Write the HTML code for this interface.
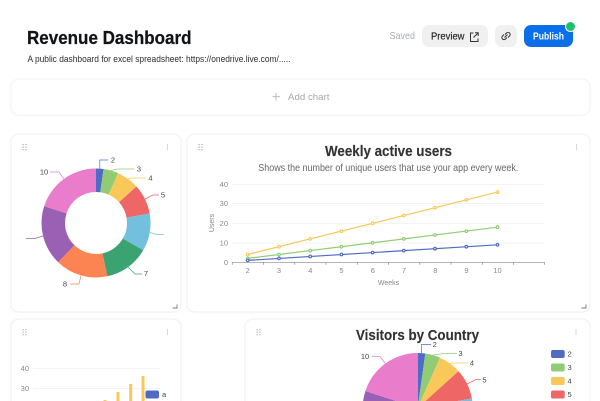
<!DOCTYPE html>
<html><head><meta charset="utf-8"><style>
html,body{margin:0;padding:0;background:#fff;width:600px;height:401px;overflow:hidden}
svg{display:block;font-family:"Liberation Sans",sans-serif;filter:blur(.3px)}
.ax{font-size:7.500px;fill:#888}
</style></head><body>
<svg width="600" height="401" viewBox="0 0 600 401" xmlns="http://www.w3.org/2000/svg">
<defs><filter id="s" x="-5%" y="-5%" width="110%" height="110%"><feDropShadow dx="0" dy="0.5" stdDeviation="1" flood-color="#000" flood-opacity="0.025"/></filter></defs>

<!-- header -->
<text x="27" y="44" font-size="18.500" font-weight="700" fill="#111316" stroke="#111316" stroke-width=".25" textLength="164.500" lengthAdjust="spacingAndGlyphs">Revenue Dashboard</text>
<text x="27.500" y="62" font-size="8.800" fill="#2c2c2c" textLength="263" lengthAdjust="spacingAndGlyphs">A public dashboard for excel spreadsheet: https://onedrive.live.com/.....</text>
<text x="389.500" y="39" font-size="10.500" fill="#aaadb2" textLength="25.500" lengthAdjust="spacingAndGlyphs">Saved</text>
<rect x="422" y="25" width="66" height="22" rx="7" fill="#f0f0f1"/>
<text x="431" y="39.500" font-size="10.500" fill="#222" stroke="#222" stroke-width=".15" textLength="33.500" lengthAdjust="spacingAndGlyphs">Preview</text>
<path d="M473.500 33H470.500V41.500H478V38.500M475 32.800H478.200V36M478 33L473.500 37.500" fill="none" stroke="#333" stroke-width="1"/>
<rect x="495" y="25" width="22" height="22" rx="7" fill="#f0f0f1"/>
<path d="M505 34.500l1.500-1.500a2 2 0 0 1 3 3l-1.500 1.500M507 37.500l-1.500 1.500a2 2 0 0 1-3-3l1.500-1.500M504.500 37.500l3-3" fill="none" stroke="#333" stroke-width="1"/>
<rect x="524" y="25" width="49" height="22" rx="7" fill="#0a6fe8"/>
<text x="533" y="39.500" font-size="10.500" font-weight="700" fill="#fff" textLength="31" lengthAdjust="spacingAndGlyphs">Publish</text>
<circle cx="570.500" cy="26.500" r="5" fill="#22bf68" stroke="#fff" stroke-width="1"/>

<!-- add chart -->
<rect x="11" y="79" width="579" height="36" rx="8" fill="#fff" stroke="#f3f3f5" filter="url(#s)"/>
<path d="M276 93V100.500M272.500 96.700H280" stroke="#b5b5b8" stroke-width="0.900"/>
<text x="288" y="100" font-size="9.500" fill="#a5a7ab" textLength="41.500" lengthAdjust="spacingAndGlyphs">Add chart</text>

<!-- cards -->
<rect x="11" y="134" width="170" height="178" rx="8" fill="#fff" stroke="#f1f1f3" filter="url(#s)"/>
<rect x="187" y="134" width="403" height="178" rx="8" fill="#fff" stroke="#f1f1f3" filter="url(#s)"/>
<rect x="11" y="319" width="170" height="100" rx="8" fill="#fff" stroke="#f1f1f3" filter="url(#s)"/>
<rect x="245" y="319" width="345" height="100" rx="8" fill="#fff" stroke="#f1f1f3" filter="url(#s)"/>

<!-- grips -->
<g fill="#b8b8bc">
<rect x="22.500" y="144" width="1.300" height="1.300"/><rect x="25.300" y="144" width="1.300" height="1.300"/><rect x="22.500" y="146.500" width="1.300" height="1.300"/><rect x="25.300" y="146.500" width="1.300" height="1.300"/><rect x="22.500" y="149" width="1.300" height="1.300"/><rect x="25.300" y="149" width="1.300" height="1.300"/>
<rect x="198.500" y="144" width="1.300" height="1.300"/><rect x="201.300" y="144" width="1.300" height="1.300"/><rect x="198.500" y="146.500" width="1.300" height="1.300"/><rect x="201.300" y="146.500" width="1.300" height="1.300"/><rect x="198.500" y="149" width="1.300" height="1.300"/><rect x="201.300" y="149" width="1.300" height="1.300"/>
<rect x="22.500" y="329" width="1.300" height="1.300"/><rect x="25.300" y="329" width="1.300" height="1.300"/><rect x="22.500" y="331.500" width="1.300" height="1.300"/><rect x="25.300" y="331.500" width="1.300" height="1.300"/><rect x="22.500" y="334" width="1.300" height="1.300"/><rect x="25.300" y="334" width="1.300" height="1.300"/>
<rect x="256.500" y="329" width="1.300" height="1.300"/><rect x="259.300" y="329" width="1.300" height="1.300"/><rect x="256.500" y="331.500" width="1.300" height="1.300"/><rect x="259.300" y="331.500" width="1.300" height="1.300"/><rect x="256.500" y="334" width="1.300" height="1.300"/><rect x="259.300" y="334" width="1.300" height="1.300"/>
<circle cx="167.500" cy="145" r=".6"/><circle cx="167.500" cy="147" r=".6"/><circle cx="167.500" cy="149" r=".6"/>
<circle cx="576.500" cy="145" r=".6"/><circle cx="576.500" cy="147" r=".6"/><circle cx="576.500" cy="149" r=".6"/>
<circle cx="167.500" cy="330" r=".6"/><circle cx="167.500" cy="332" r=".6"/><circle cx="167.500" cy="334" r=".6"/>
<circle cx="576" cy="330" r=".6"/><circle cx="576" cy="332" r=".6"/><circle cx="576" cy="334" r=".6"/>
</g>
<path d="M177 304.500V308H172.500M586 304.500V308H581.500" fill="none" stroke="#777" stroke-width="0.900"/>

<!-- donut -->
<path fill="#4f6bc6" d="M96 168.500A54.500 54.500 0 0 1 103.580 169.030L100.310 192.300A31 31 0 0 0 96 192Z"/>
<path fill="#91cc75" d="M103.580 169.030A54.500 54.500 0 0 1 118.170 173.210L108.610 194.680A31 31 0 0 0 100.310 192.300Z"/>
<path fill="#fac858" d="M118.170 173.210A54.500 54.500 0 0 1 136.500 186.530L119.040 202.260A31 31 0 0 0 108.610 194.680Z"/>
<path fill="#ee6666" d="M136.500 186.530A54.500 54.500 0 0 1 149.670 213.540L126.530 217.620A31 31 0 0 0 119.040 202.260Z"/>
<path fill="#73c0de" d="M149.670 213.540A54.500 54.500 0 0 1 143.200 250.250L122.850 238.500A31 31 0 0 0 126.530 217.620Z"/>
<path fill="#3ba272" d="M143.200 250.250A54.500 54.500 0 0 1 107.330 276.310L102.450 253.320A31 31 0 0 0 122.850 238.500Z"/>
<path fill="#fc8452" d="M107.330 276.310A54.500 54.500 0 0 1 58.140 262.200L74.470 245.300A31 31 0 0 0 102.450 253.320Z"/>
<path fill="#9a60b4" d="M58.140 262.200A54.500 54.500 0 0 1 44.170 206.160L66.520 213.420A31 31 0 0 0 74.470 245.300Z"/>
<path fill="#ea7ccc" d="M44.170 206.160A54.500 54.500 0 0 1 96 168.500L96 192A31 31 0 0 0 66.520 213.420Z"/>
<g fill="none" stroke-width="0.700">
<path d="M99.800 168.500V160H108" stroke="#4f6bc6"/>
<path d="M111 170.500L118 169H134" stroke="#91cc75"/>
<path d="M128 179L131 178H146" stroke="#fac858"/>
<path d="M145 199L153 195H159" stroke="#ee6666"/>
<path d="M150 232.500L157 234.500H164" stroke="#73c0de"/>
<path d="M128 267L135 274H142" stroke="#3ba272"/>
<path d="M81 275.500L79 284H70" stroke="#fc8452"/>
<path d="M43 236L35 238.500H26" stroke="#9a60b4"/>
<path d="M64 179L59 172H50" stroke="#ea7ccc"/>
</g>
<g font-size="7.500" fill="#444" text-anchor="middle">
<text x="113" y="162.500">2</text><text x="139" y="171.500">3</text><text x="150.500" y="180.500">4</text><text x="163" y="197.500">5</text><text x="146" y="276">7</text><text x="65" y="286.500">8</text><text x="44" y="174.500">10</text>
</g>

<!-- line chart -->
<text x="325" y="156" font-size="14.500" font-weight="700" fill="#333" stroke="#333" stroke-width=".15" textLength="127" lengthAdjust="spacingAndGlyphs">Weekly active users</text>
<text x="258.300" y="171" font-size="10.300" fill="#666" textLength="260" lengthAdjust="spacingAndGlyphs">Shows the number of unique users that use your app every week.</text>
<path d="M232 184.500H544.500M232 203.500H544.500M232 223.500H544.500M232 243H544.500" stroke="#eef0f3" stroke-width="0.800"/>
<path d="M232.300 262.300H544.500M232.300 262.300v2.500M263.500 262.300v2.500M294.800 262.300v2.500M326 262.300v2.500M357.300 262.300v2.500M388.500 262.300v2.500M419.800 262.300v2.500M451 262.300v2.500M482.300 262.300v2.500M513.500 262.300v2.500M544.500 262.300v2.500" stroke="#8a8a8e" stroke-width="0.700" fill="none"/>
<g class="ax" text-anchor="end">
<text x="228" y="186.800">40</text><text x="228" y="206">30</text><text x="228" y="225.800">20</text><text x="228" y="245.300">10</text><text x="228" y="264.800">0</text>
</g>
<g class="ax" text-anchor="middle">
<text x="247.700" y="272.800">2</text><text x="279" y="272.800">3</text><text x="310.300" y="272.800">4</text><text x="341.500" y="272.800">5</text><text x="372.800" y="272.800">6</text><text x="404" y="272.800">7</text><text x="435.300" y="272.800">8</text><text x="466.500" y="272.800">9</text><text x="497.500" y="272.800">10</text>
<text x="388.500" y="285" style="font-size:7px">Weeks</text>
<text transform="translate(214 223) rotate(-90)" style="font-size:7px">Users</text>
</g>
<g fill="#fff" stroke-width="1.200">
<g stroke="#fac858"><path d="M247.700 254.500L497.500 192.100" fill="none"/>
<circle cx="247.700" cy="254.500" r="1.300"/><circle cx="279" cy="246.700" r="1.300"/><circle cx="310.200" cy="238.900" r="1.300"/><circle cx="341.400" cy="231.100" r="1.300"/><circle cx="372.600" cy="223.300" r="1.300"/><circle cx="403.800" cy="215.500" r="1.300"/><circle cx="435" cy="207.700" r="1.300"/><circle cx="466.300" cy="199.900" r="1.300"/><circle cx="497.500" cy="192.100" r="1.300"/></g>
<g stroke="#91cc75"><path d="M247.700 258.400L497.500 227.200" fill="none"/>
<circle cx="247.700" cy="258.400" r="1.300"/><circle cx="279" cy="254.500" r="1.300"/><circle cx="310.200" cy="250.600" r="1.300"/><circle cx="341.400" cy="246.700" r="1.300"/><circle cx="372.600" cy="242.800" r="1.300"/><circle cx="403.800" cy="238.900" r="1.300"/><circle cx="435" cy="235" r="1.300"/><circle cx="466.300" cy="231.100" r="1.300"/><circle cx="497.500" cy="227.200" r="1.300"/></g>
<g stroke="#4f6bc6"><path d="M247.700 260.400L497.500 244.800" fill="none"/>
<circle cx="247.700" cy="260.400" r="1.300"/><circle cx="279" cy="258.400" r="1.300"/><circle cx="310.200" cy="256.500" r="1.300"/><circle cx="341.400" cy="254.500" r="1.300"/><circle cx="372.600" cy="252.600" r="1.300"/><circle cx="403.800" cy="250.600" r="1.300"/><circle cx="435" cy="248.700" r="1.300"/><circle cx="466.300" cy="246.700" r="1.300"/><circle cx="497.500" cy="244.800" r="1.300"/></g>
</g>

<!-- bar chart -->
<path d="M33 368.500H160M33 388.500H160" stroke="#eef0f3" stroke-width="0.800"/>
<text x="29" y="371" text-anchor="end" font-size="7.500" fill="#888">40</text>
<text x="29" y="391" text-anchor="end" font-size="7.500" fill="#888">30</text>
<g fill="#fac858">
<rect x="103.500" y="400" width="3" height="2"/><rect x="116.500" y="392" width="3" height="10"/><rect x="129.200" y="384" width="3" height="18"/><rect x="141.500" y="376" width="3" height="26"/>
</g>
<rect x="145.500" y="390.500" width="13.500" height="8" rx="2" fill="#4f6bc6"/>
<text x="162" y="397" font-size="7.500" fill="#444">a</text>

<!-- pie -->
<text x="356" y="340" font-size="14.500" font-weight="700" fill="#333" stroke="#333" stroke-width=".15" textLength="123" lengthAdjust="spacingAndGlyphs">Visitors by Country</text>
<path fill="#4f6bc6" d="M417.700 408L417.700 353A55 55 0 0 1 425.350 353.530Z"/>
<path fill="#91cc75" d="M417.700 408L425.350 353.530A55 55 0 0 1 440.070 357.750Z"/>
<path fill="#fac858" d="M417.700 408L440.070 357.750A55 55 0 0 1 458.570 371.200Z"/>
<path fill="#ee6666" d="M417.700 408L458.570 371.200A55 55 0 0 1 471.860 398.450Z"/>
<path fill="#73c0de" d="M417.700 408L471.860 398.450A55 55 0 0 1 465.330 435.500Z"/>
<path fill="#9a60b4" d="M417.700 408L379.500 447.560A55 55 0 0 1 365.390 391Z"/>
<path fill="#ea7ccc" d="M417.700 408L365.390 391A55 55 0 0 1 417.700 353Z"/>
<g fill="none" stroke-width="0.700">
<path d="M421.500 353V344.500H431" stroke="#4f6bc6"/>
<path d="M432.900 355L444 353.500H457" stroke="#91cc75"/>
<path d="M450 363.500L453 363H468" stroke="#fac858"/>
<path d="M467 384L476 379.500H481" stroke="#ee6666"/>
<path d="M385.400 363.500L380 356.500H372" stroke="#ea7ccc"/>
</g>
<g font-size="7.500" fill="#444" text-anchor="middle">
<text x="434.700" y="347">2</text><text x="460.500" y="356">3</text><text x="472" y="365.500">4</text><text x="484.500" y="382.500">5</text><text x="365" y="359">10</text>
</g>
<rect x="551" y="350" width="13.700" height="8" rx="2" fill="#4f6bc6"/>
<rect x="551" y="363.500" width="13.700" height="8" rx="2" fill="#91cc75"/>
<rect x="551" y="377" width="13.700" height="8" rx="2" fill="#fac858"/>
<rect x="551" y="390.500" width="13.700" height="8" rx="2" fill="#ee6666"/>
<g font-size="7.500" fill="#444">
<text x="567.500" y="356.500">2</text><text x="567.500" y="370">3</text><text x="567.500" y="383.500">4</text><text x="567.500" y="397">5</text>
</g>
</svg>
</body></html>
